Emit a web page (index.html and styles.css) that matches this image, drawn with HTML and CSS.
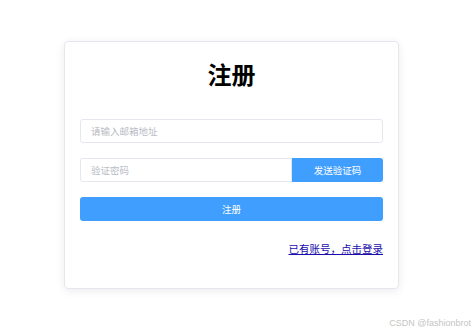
FILE: index.html
```html
<!DOCTYPE html>
<html lang="zh">
<head>
<meta charset="utf-8">
<link rel="stylesheet" href="styles.css">
</head>
<body>
<div class="card">
  <h1 class="title">注册</h1>
  <div class="form">
    <input class="input" type="text" placeholder="请输入邮箱地址">
    <div class="code-row">
      <input class="input code-input" type="text" placeholder="验证密码">
      <button class="btn code-btn">发送验证码</button>
    </div>
    <button class="btn submit">注册</button>
  </div>
  <div class="links"><a href="#" class="login-link">已有账号，点击登录</a></div>
</div>
<div class="watermark">CSDN @fashionbrot</div>
</body>
</html>
```
FILE: styles.css
```css
html, body {
  margin: 0;
  padding: 0;
  background: #ffffff;
  font-family: "Noto Sans CJK SC", "Noto Sans", sans-serif;
}
body {
  width: 474px;
  height: 330px;
  position: relative;
  overflow: hidden;
  padding-top: 41px;
  box-sizing: border-box;
}
.card {
  margin-left: 64px;
  width: 335px;
  height: 248px;
  box-sizing: border-box;
  border: 1px solid #e4e7ed;
  border-radius: 4px;
  box-shadow: 0 2px 10px rgba(0, 0, 0, 0.08);
  padding: 16px 15px 0 15px;
}
.title {
  margin: 0;
  font-size: 24px;
  line-height: 32px;
  font-weight: 700;
  text-align: center;
  color: #000;
}
.form {
  margin-top: 29px;
  display: flex;
  flex-direction: column;
  gap: 15px;
}
.input {
  display: block;
  width: 100%;
  height: 24px;
  box-sizing: border-box;
  border: 1px solid #e4e7ed;
  border-radius: 3px;
  padding: 0 10px;
  font-family: inherit;
  font-size: 9.5px;
  color: #606266;
  outline: none;
  background: #fff;
}
.input::placeholder {
  color: #b8bcc4;
}
.code-row {
  display: flex;
}
.code-input {
  flex: 1;
  width: auto;
  border-radius: 3px 0 0 3px;
}
.btn {
  height: 24px;
  border: none;
  background: #409eff;
  color: #ffffff;
  font-family: inherit;
  font-size: 9.5px;
  border-radius: 3px;
  padding: 0;
}
.code-btn {
  width: 91px;
  flex: none;
  border-radius: 0 3px 3px 0;
}
.submit {
  width: 100%;
}
.links {
  margin-top: 17px;
  text-align: right;
  line-height: 16px;
}
.login-link {
  font-size: 10.5px;
  color: #1a0dab;
  text-decoration: underline;
}
.watermark {
  position: absolute;
  right: 3px;
  bottom: 2px;
  font-family: "Liberation Sans", sans-serif;
  font-size: 9px;
  color: #c4c4c4;
}
```
